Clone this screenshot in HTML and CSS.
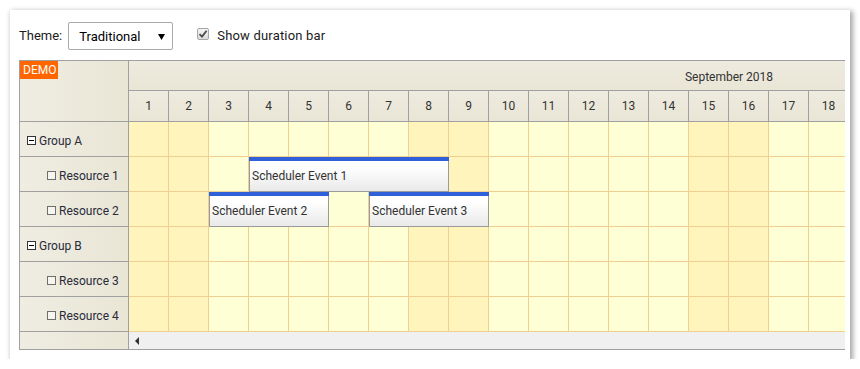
FILE: index.html
```html
<!DOCTYPE html>
<html>
<head>
<meta charset="utf-8">
<link rel="stylesheet" href="styles.css">
</head>
<body>
<div class="card">
  <div class="toolbar">
    <span class="label">Theme:</span>
    <div class="select"><span>Traditional</span><svg class="caret" width="7" height="6" viewBox="0 0 7 6"><polygon points="0,0 7,0 3.5,6" fill="#000"/></svg></div>
    <span class="check"><svg width="12" height="12" viewBox="0 0 12 12"><path d="M2.5 6.2 L5 8.6 L9.6 2.8" fill="none" stroke="#4a4a4a" stroke-width="1.8"/></svg></span>
    <span class="label check-label">Show duration bar</span>
  </div>
  <div class="scheduler">
    <div class="rowheaders">
      <div class="corner"><span class="demo">DEMO</span></div>
      <div class="rh"><span class="tree-minus"></span>Group A</div>
      <div class="rh leaf"><span class="tree-leaf"></span>Resource 1</div>
      <div class="rh leaf"><span class="tree-leaf"></span>Resource 2</div>
      <div class="rh"><span class="tree-minus"></span>Group B</div>
      <div class="rh leaf"><span class="tree-leaf"></span>Resource 3</div>
      <div class="rh leaf"><span class="tree-leaf"></span>Resource 4</div>
      <div class="rh-bottom"></div>
    </div>
    <div class="main">
      <div class="month-row"><div class="month">September 2018</div></div>
      <div class="day-row">
        <div class="day">1</div><div class="day">2</div><div class="day">3</div><div class="day">4</div><div class="day">5</div><div class="day">6</div><div class="day">7</div><div class="day">8</div><div class="day">9</div><div class="day">10</div><div class="day">11</div><div class="day">12</div><div class="day">13</div><div class="day">14</div><div class="day">15</div><div class="day">16</div><div class="day">17</div><div class="day">18</div>
      </div>
      <div class="body">
        <div class="row"><div class="c we"></div><div class="c we"></div><div class="c"></div><div class="c"></div><div class="c"></div><div class="c"></div><div class="c"></div><div class="c we"></div><div class="c we"></div><div class="c"></div><div class="c"></div><div class="c"></div><div class="c"></div><div class="c"></div><div class="c we"></div><div class="c we"></div><div class="c"></div><div class="c"></div></div>
        <div class="row"><div class="c we"></div><div class="c we"></div><div class="c"></div><div class="c"></div><div class="c"></div><div class="c"></div><div class="c"></div><div class="c we"></div><div class="c we"></div><div class="c"></div><div class="c"></div><div class="c"></div><div class="c"></div><div class="c"></div><div class="c we"></div><div class="c we"></div><div class="c"></div><div class="c"></div></div>
        <div class="row"><div class="c we"></div><div class="c we"></div><div class="c"></div><div class="c"></div><div class="c"></div><div class="c"></div><div class="c"></div><div class="c we"></div><div class="c we"></div><div class="c"></div><div class="c"></div><div class="c"></div><div class="c"></div><div class="c"></div><div class="c we"></div><div class="c we"></div><div class="c"></div><div class="c"></div></div>
        <div class="row"><div class="c we"></div><div class="c we"></div><div class="c"></div><div class="c"></div><div class="c"></div><div class="c"></div><div class="c"></div><div class="c we"></div><div class="c we"></div><div class="c"></div><div class="c"></div><div class="c"></div><div class="c"></div><div class="c"></div><div class="c we"></div><div class="c we"></div><div class="c"></div><div class="c"></div></div>
        <div class="row"><div class="c we"></div><div class="c we"></div><div class="c"></div><div class="c"></div><div class="c"></div><div class="c"></div><div class="c"></div><div class="c we"></div><div class="c we"></div><div class="c"></div><div class="c"></div><div class="c"></div><div class="c"></div><div class="c"></div><div class="c we"></div><div class="c we"></div><div class="c"></div><div class="c"></div></div>
        <div class="row"><div class="c we"></div><div class="c we"></div><div class="c"></div><div class="c"></div><div class="c"></div><div class="c"></div><div class="c"></div><div class="c we"></div><div class="c we"></div><div class="c"></div><div class="c"></div><div class="c"></div><div class="c"></div><div class="c"></div><div class="c we"></div><div class="c we"></div><div class="c"></div><div class="c"></div></div>
        <div class="event" style="left:120px;top:35px;width:200px">Scheduler Event 1</div>
        <div class="event" style="left:80px;top:70px;width:120px">Scheduler Event 2</div>
        <div class="event" style="left:240px;top:70px;width:120px">Scheduler Event 3</div>
      </div>
      <div class="hscroll"><svg class="arrow" width="4" height="8" viewBox="0 0 4 8"><polygon points="4,0 4,8 0,4" fill="#333"/></svg></div>
    </div>
  </div>
</div>
</body>
</html>
```
FILE: styles.css
```css
html, body {
  margin: 0;
  padding: 0;
  background: #fff;
}

.card {
  box-sizing: border-box;
  margin: 10px 0 0 10px;
  width: 840px;
  height: 349px;
  padding: 12px 0 0 9px;
  background: #fff;
  box-shadow: 2px 2px 5px 1px rgba(0, 0, 0, 0.35);
}

.toolbar {
  display: flex;
  align-items: center;
  height: 28px;
  font-family: Roboto, "Liberation Sans", sans-serif;
  font-size: 13px;
  color: #1a1a1a;
}

.label {
  line-height: 16px;
}

.select {
  box-sizing: border-box;
  display: flex;
  align-items: center;
  justify-content: space-between;
  margin-left: 6px;
  width: 105px;
  height: 28px;
  padding: 0 7px 0 10px;
  border: 1px solid #a9a9a9;
  border-radius: 2px;
  background: #fff;
  color: #000;
}

.caret {
  display: block;
  margin-top: 1px;
}

.check {
  box-sizing: border-box;
  display: block;
  align-self: flex-start;
  margin: 6px 0 0 24px;
  width: 12px;
  height: 12px;
  border: 1px solid #a6a6a6;
  border-radius: 2px;
  background: linear-gradient(#f4f4f4, #dcdcdc);
}

.check svg {
  display: block;
  margin: -1px 0 0 -1px;
}

.check-label {
  margin-left: 8px;
  letter-spacing: 0.18px;
}

.scheduler {
  display: flex;
  margin-top: 10px;
  width: 826px;
  height: 290px;
  box-sizing: border-box;
  border-top: 1px solid #a0a0a0;
  border-left: 1px solid #a0a0a0;
  border-bottom: 1px solid #a0a0a0;
  overflow: hidden;
  font-family: Roboto, "Liberation Sans", sans-serif;
  font-size: 12px;
  color: #333;
}

.rowheaders {
  flex: 0 0 108px;
  display: flex;
  flex-direction: column;
  border-right: 1px solid #a0a0a0;
  background: linear-gradient(to right, #efede2, #e9e6d6);
}

.corner {
  position: relative;
  height: 60px;
  border-bottom: 1px solid #a0a0a0;
}

.demo {
  position: absolute;
  left: 0;
  top: 0;
  height: 18px;
  padding: 0 2px 0 3px;
  line-height: 18px;
  background: #ff6600;
  color: #fff;
  font-size: 12px;
}

.rh {
  display: flex;
  align-items: center;
  box-sizing: border-box;
  height: 35px;
  padding: 3px 0 0 7px;
  border-bottom: 1px solid #a0a0a0;
  color: #2a2a3a;
}

.rh.leaf {
  padding-left: 27px;
}

.tree-minus,
.tree-leaf {
  box-sizing: border-box;
  position: relative;
  flex: 0 0 9px;
  width: 9px;
  height: 9px;
  margin-right: 3px;
  border: 1px solid #333;
  background: #fff;
}

.tree-minus::after {
  content: "";
  position: absolute;
  left: 1px;
  top: 3px;
  width: 5px;
  height: 1px;
  background: #000;
}

.tree-leaf {
  border-color: #6e6e6e;
  background: #f6f5ef;
}

.rh-bottom {
  flex: 1;
}

.main {
  flex: 1;
  display: flex;
  flex-direction: column;
  min-width: 0;
  overflow: hidden;
}

.month-row {
  height: 29px;
  border-bottom: 1px solid #a0a0a0;
  background: linear-gradient(#eeebdf, #e9e6d7);
  overflow: hidden;
}

.month {
  width: 1200px;
  height: 29px;
  line-height: 32px;
  text-align: center;
}

.day-row {
  display: flex;
  height: 30px;
  border-bottom: 1px solid #a0a0a0;
  background: linear-gradient(#eeebdf, #e9e6d7);
}

.day {
  flex: 0 0 39px;
  border-right: 1px solid #a0a0a0;
  line-height: 31px;
  text-align: center;
}

.body {
  position: relative;
}

.row {
  display: flex;
  height: 34px;
  border-bottom: 1px solid #efcf92;
}

.c {
  flex: 0 0 39px;
  border-right: 1px solid #efcf92;
  background: #ffffd5;
}

.c.we {
  background: #fff4bc;
}

.event {
  position: absolute;
  box-sizing: border-box;
  height: 35px;
  padding: 4px 0 0 2px;
  display: flex;
  align-items: center;
  border: 1px solid #9a9a9a;
  border-top: 0;
  background: linear-gradient(#ffffff, #ffffff 30%, #e9e9e9);
  color: #333;
  white-space: nowrap;
  overflow: visible;
}

.event::before {
  content: "";
  position: absolute;
  left: -1px;
  right: -1px;
  top: 0;
  height: 4px;
  background: #2f5fd9;
}

.hscroll {
  flex: 1;
  display: flex;
  align-items: center;
  padding-left: 6px;
  background: #f0f0f0;
}

.arrow {
  display: block;
}
```
